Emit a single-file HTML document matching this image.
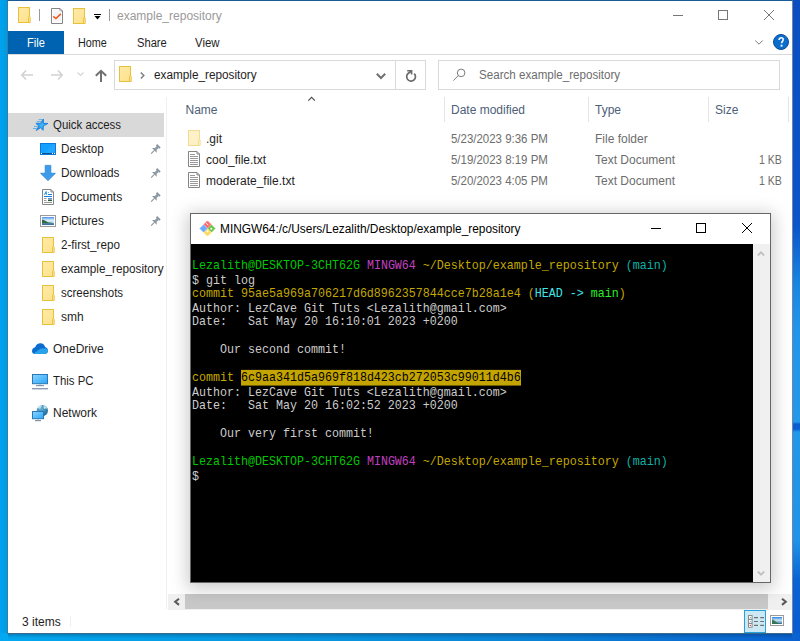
<!DOCTYPE html>
<html><head><meta charset="utf-8">
<style>
*{margin:0;padding:0;box-sizing:border-box}
html,body{width:800px;height:641px;overflow:hidden}
body{position:relative;font-family:"Liberation Sans",sans-serif;font-size:12px;color:#000;background:#0a5ad0}
.a{position:absolute}
.t{position:absolute;white-space:nowrap;line-height:12px;transform-origin:0 0}
svg{position:absolute;overflow:visible}
#deskL{left:0;top:0;width:8px;height:641px;background:linear-gradient(90deg,#00a4ee,#0299e2 85%,#2f7fa8)}
#deskR{left:792px;top:0;width:8px;height:641px;background:linear-gradient(180deg,#0b4ec0 0,#0b55c8 225px,#1a86e0 285px,#2196e8 330px,#2598e8 422px,#0a5ed0 424px,#0a5ed0 429px,#2298e8 432px,#2094e6 540px,#0a64d2 580px,#0a5ad0 641px)}
#deskB{left:0;top:633px;width:800px;height:8px;background:linear-gradient(90deg,#02a8f0 0%,#0898e0 35%,#0a84d6 65%,#0a62d0 100%)}
#deskS{left:8px;top:634px;width:784px;height:5px;background:linear-gradient(180deg,rgba(0,30,70,0.28),rgba(0,30,70,0.08) 60%,rgba(0,0,0,0))}
#win{left:7px;top:0;width:786px;height:634px;background:#fff;border:1px solid #2f80a8;border-top-color:#175a94;border-right-color:rgba(0,30,100,0.55);border-bottom-color:#3a6a8a}
.sep{position:absolute;background:#e5e5e5}
.hd{color:#4c607a}
.gr{color:#6d6d6d}
/* terminal */
#term{left:190px;top:213px;width:581px;height:370px;border:1px solid #666;background:#fff;
box-shadow:0 3px 16px 3px rgba(0,0,0,0.20)}
#tbody{position:absolute;left:0;top:30px;width:562px;height:338px;background:#000;overflow:hidden}
#tscroll{position:absolute;left:562px;top:30px;width:17px;height:338px;background:#f0f0f0}
pre{font-family:"Liberation Mono",monospace;font-size:11.67px;letter-spacing:0px;line-height:12.5px;transform:scaleY(1.12);transform-origin:0 0;color:#cccccc;position:absolute;left:1px;top:15px}
.g{color:#00c800}.m{color:#c040c0}.y{color:#c4a800}.c{color:#10b0a8}.o{color:#c4a800}.hc{color:#40e6e6}.hg{color:#28f028}
.hl{background:#c4a400;color:#000}
</style></head><body>
<svg width="0" height="0" style="position:absolute">
 <defs>
  <linearGradient id="fg" x1="0" y1="0" x2="1" y2="1"><stop offset="0" stop-color="#ffeaa8"/><stop offset="1" stop-color="#fde28a"/></linearGradient>
  <symbol id="folder" viewBox="0 0 13 16">
   <rect x="0.5" y="0.5" width="11" height="15" fill="url(#fg)" stroke="#e8c13c" stroke-width="1"/>
   <path d="M10.6 15.5V10.3A0.8 0.8 0 0 1 12.2 10.3V15.5Z" fill="#fff0b8" stroke="#e8c13c" stroke-width="1"/>
  </symbol>
  <symbol id="txt" viewBox="0 0 12 16">
   <path d="M0.5 0.5H9L11.5 3V15.5H0.5Z" fill="#fff" stroke="#858585"/>
   <path d="M9 0.5V3H11.5" fill="none" stroke="#858585"/>
   <path d="M2 3.5H7M2 5.5H10M2 7.5H10M2 9.5H10M2 11.5H10M2 13.5H10" stroke="#999" stroke-width="1"/>
  </symbol>
  <symbol id="pin" viewBox="0 0 20 18">
   <g transform="translate(13,5.7) rotate(45)" fill="#8a96a0">
    <rect x="-2.4" y="0" width="4.8" height="2"/>
    <rect x="-1.3" y="1.8" width="2.6" height="3"/>
    <path d="M-1.3 4.6H1.3L3.2 6.6H-3.2Z"/>
    <rect x="-0.55" y="6.5" width="1.1" height="4.6"/>
   </g>
  </symbol>
 </defs>
</svg>

<div id="deskL" class="a"></div>
<div id="deskR" class="a"></div>
<div id="deskB" class="a"></div>
<div id="deskS" class="a"></div>
<div id="win" class="a"></div>

<!-- ===== title bar ===== -->
<svg style="left:18px;top:7px" width="13" height="16"><use href="#folder"/></svg>
<div class="a" style="left:39px;top:9px;width:1px;height:12px;background:#999"></div>
<svg style="left:51px;top:8px" width="12" height="16" viewBox="0 0 12 16">
 <path d="M0.5 0.5H9L11.5 3V15.5H0.5Z" fill="#fff" stroke="#858585"/>
 <path d="M9 0.5V3H11.5" fill="none" stroke="#858585"/>
 <rect x="2" y="2.5" width="8" height="11" fill="#f3f4f6"/>
 <path d="M2.2 8.4L4.9 10.6L9.8 5.9" fill="none" stroke="#f0561c" stroke-width="1.5"/>
</svg>
<svg style="left:73px;top:8px" width="13" height="16"><use href="#folder"/></svg>
<div class="a" style="left:94px;top:14px;width:7px;height:1px;background:#000"></div>
<svg style="left:94px;top:16px" width="7" height="4" viewBox="0 0 7 4"><path d="M0.5 0H6.5L3.5 3.5Z" fill="#000"/></svg>
<div class="a" style="left:109px;top:9px;width:1px;height:12px;background:#999"></div>
<div class="t" style="left:117px;top:10px;color:#9a9a9a">example_repository</div>
<!-- window controls -->
<div class="a" style="left:673px;top:15px;width:10px;height:1px;background:#777"></div>
<div class="a" style="left:718px;top:10px;width:10px;height:10px;border:1px solid #777"></div>
<svg style="left:764px;top:10px" width="10" height="10" viewBox="0 0 10 10"><path d="M0 0L10 10M10 0L0 10" stroke="#777" stroke-width="1"/></svg>

<!-- ===== ribbon tabs ===== -->
<div class="a" style="left:8px;top:31px;width:56px;height:23px;background:#0063b1"></div>
<div class="t" style="left:27px;top:37px;color:#fff;transform:scaleX(0.92)">File</div>
<div class="t" style="left:78px;top:37px;color:#1e1e1e;transform:scaleX(0.9)">Home</div>
<div class="t" style="left:137px;top:37px;color:#1e1e1e;transform:scaleX(0.93)">Share</div>
<div class="t" style="left:195px;top:37px;color:#1e1e1e;transform:scaleX(0.95)">View</div>
<svg style="left:755px;top:40px" width="8" height="5" viewBox="0 0 8 5"><path d="M0.3 0.5L4 4.2L7.7 0.5" fill="none" stroke="#7a7a7a" stroke-width="1"/></svg>
<svg style="left:773px;top:34px" width="16" height="16" viewBox="0 0 16 16">
 <circle cx="8" cy="8" r="7.5" fill="#0a6ccb" stroke="#0b4c9a" stroke-width="1"/>
 <path d="M6.1 6.1C6.1 4.6 7 3.8 8.2 3.8C9.4 3.8 10.2 4.6 10.2 5.7C10.2 7.3 8.6 7.5 8.6 9.3" fill="none" stroke="#f4f8ff" stroke-width="1.6"/>
 <rect x="7.6" y="10.7" width="1.9" height="1.9" fill="#f4f8ff"/>
</svg>
<div class="sep" style="left:8px;top:54px;width:784px;height:1px;background:#dadada"></div>

<!-- ===== address row ===== -->
<svg style="left:21px;top:70px" width="12" height="10" viewBox="0 0 12 10"><path d="M5 0.5L0.8 5L5 9.5M0.8 5H12" fill="none" stroke="#d2d2d2" stroke-width="1.6"/></svg>
<svg style="left:51px;top:70px" width="12" height="10" viewBox="0 0 12 10"><path d="M7 0.5L11.2 5L7 9.5M11.2 5H0" fill="none" stroke="#d2d2d2" stroke-width="1.6"/></svg>
<svg style="left:77px;top:72px" width="7" height="4" viewBox="0 0 7 4"><path d="M0.5 0.5L3.5 3.5L6.5 0.5" fill="none" stroke="#d6d6d6" stroke-width="1.2"/></svg>
<svg style="left:95px;top:70px" width="12" height="12" viewBox="0 0 12 12"><path d="M0.8 5.8L6 0.8L11.2 5.8M6 1V12" fill="none" stroke="#707070" stroke-width="2"/></svg>

<div class="a" style="left:114px;top:60px;width:312px;height:30px;border:1px solid #d9d9d9"></div>
<svg style="left:119px;top:66px" width="13" height="16"><use href="#folder"/></svg>
<svg style="left:140px;top:72px" width="5" height="7" viewBox="0 0 5 7"><path d="M0.8 0.5L3.8 3.5L0.8 6.5" fill="none" stroke="#808080" stroke-width="1.5"/></svg>
<div class="t" style="left:154px;top:69px;color:#1e1e1e;transform:scaleX(0.98)">example_repository</div>
<svg style="left:376px;top:73px" width="10" height="6" viewBox="0 0 10 6"><path d="M0.8 0.8L5 5L9.2 0.8" fill="none" stroke="#707070" stroke-width="2"/></svg>
<div class="a" style="left:395px;top:61px;width:1px;height:28px;background:#d9d9d9"></div>
<svg style="left:405px;top:70px" width="12" height="11" viewBox="0 0 12 11">
 <path d="M9.2 3.6A4.4 4.4 0 1 1 3.4 3.2L6.4 1" fill="none" stroke="#6a6a6a" stroke-width="1.7"/>
 <path d="M2.2 0.8H6.6V4.6" fill="none" stroke="#6a6a6a" stroke-width="1.6"/>
</svg>
<div class="a" style="left:438px;top:60px;width:342px;height:30px;border:1px solid #d9d9d9"></div>
<svg style="left:452px;top:68px" width="13" height="13" viewBox="0 0 13 13">
 <circle cx="9.1" cy="4.9" r="3.8" fill="none" stroke="#7a7a7a" stroke-width="1"/>
 <path d="M6.2 7.7L1.3 12.6" stroke="#7a7a7a" stroke-width="1"/>
</svg>
<div class="t" style="left:479px;top:69px;color:#6d6d6d;transform:scaleX(0.966)">Search example_repository</div>

<!-- ===== nav pane ===== -->
<div class="a" style="left:8px;top:113px;width:156px;height:24px;background:#d9d9d9"></div>
<svg style="left:30px;top:115px" width="22" height="20" viewBox="0 0 22 20">
 <defs><radialGradient id="stg" cx="0.5" cy="0.55" r="0.5"><stop offset="0" stop-color="#48baff"/><stop offset="1" stop-color="#1a8ae0"/></radialGradient></defs>
 <path d="M13.4 4L13.37 8.37L18 8.4L13.3 11.03L13.1 15.3L10.55 12.7L6.3 15.5L8.86 11.05L5.9 8.3L10.52 8.35Z" fill="url(#stg)" stroke="#1880d8" stroke-width="0.9" stroke-linejoin="round"/>
 <path d="M9 4.6H12.3M7.2 6.6H10.8M4.4 11.4H7.4M3.4 13.5H6.4" stroke="#3aa6f0" stroke-width="0.9" stroke-linecap="round" opacity="0.85"/>
</svg>
<div class="t" style="left:53px;top:119px;color:#1e1e1e;transform:scaleX(0.952)">Quick access</div>

<svg style="left:40px;top:143px" width="16" height="12" viewBox="0 0 16 12">
 <rect x="0" y="0" width="16" height="12" fill="#0a7ad6"/>
 <rect x="1" y="1" width="14" height="9" fill="#14a0ff"/>
 <path d="M5 10L13 1H15V10Z" fill="#2aabff" opacity="0.6"/>
 <rect x="2" y="10" width="12" height="1" fill="#0a5090"/>
 <rect x="1" y="10" width="1" height="1" fill="#fff"/><rect x="12" y="10" width="1" height="1" fill="#fff"/><rect x="14" y="10" width="1" height="1" fill="#fff"/>
</svg>
<div class="t" style="left:61px;top:143px;color:#1e1e1e;transform:scaleX(0.97)">Desktop</div>
<svg style="left:146px;top:140px" width="20" height="18"><use href="#pin" width="20" height="18"/></svg>

<svg style="left:40px;top:165px" width="16" height="16" viewBox="0 0 16 16"><path d="M5.2 0.4H10.8V8.3H15.4L8 15.6L0.6 8.3H5.2Z" fill="#3d9bea" stroke="#2484da" stroke-width="0.8" stroke-linejoin="miter"/></svg>
<div class="t" style="left:61px;top:167px;color:#1e1e1e;transform:scaleX(0.985)">Downloads</div>
<svg style="left:146px;top:164px" width="20" height="18"><use href="#pin" width="20" height="18"/></svg>

<svg style="left:42px;top:189px" width="12" height="16" viewBox="0 0 12 16">
 <path d="M0.5 0.5H9L11.5 3V15.5H0.5Z" fill="#fff" stroke="#858585"/>
 <path d="M9 0.5V3H11.5" fill="none" stroke="#858585"/>
 <path d="M2.2 5.8L4.2 2.4L4.6 5.8M3 4.6H4.6" fill="none" stroke="#1e8ee8" stroke-width="0.9"/>
 <circle cx="6.3" cy="3.4" r="0.5" fill="#1e8ee8"/>
 <path d="M6 5.5H10M2 7.5H10" stroke="#1a7fd8" stroke-width="1"/>
 <path d="M2 9.5H4.5M2 11.5H4.5M2 13.5H10" stroke="#999" stroke-width="1"/>
 <rect x="6" y="9" width="4" height="1" fill="#5a8ae8"/>
 <rect x="6" y="10.5" width="4" height="1.6" fill="#2a5a3a"/>
</svg>
<div class="t" style="left:61px;top:191px;color:#1e1e1e;transform:scaleX(1.01)">Documents</div>
<svg style="left:146px;top:188px" width="20" height="18"><use href="#pin" width="20" height="18"/></svg>

<svg style="left:40px;top:215px" width="16" height="12" viewBox="0 0 16 12">
 <rect x="0.5" y="0.5" width="15" height="11" fill="#fff" stroke="#9a9a9a"/>
 <defs><linearGradient id="sky" x1="0" y1="0" x2="0" y2="1"><stop offset="0" stop-color="#4a8ef0"/><stop offset="0.4" stop-color="#d8f0f8"/><stop offset="0.75" stop-color="#b8d8e8"/><stop offset="1" stop-color="#3a6ab0"/></linearGradient></defs>
 <rect x="2" y="2" width="12" height="8" fill="url(#sky)"/>
 <path d="M2 4.8C4 4.6 5.5 6 7.5 7C9 7.7 11 7.6 13 8V8.4H2Z" fill="#2f6a45"/>
 <path d="M2 8.4H14V10H2Z" fill="#3a6aa8" opacity="0.8"/>
</svg>
<div class="t" style="left:61px;top:215px;color:#1e1e1e;transform:scaleX(0.99)">Pictures</div>
<svg style="left:146px;top:212px" width="20" height="18"><use href="#pin" width="20" height="18"/></svg>

<svg style="left:42px;top:237px" width="13" height="16"><use href="#folder"/></svg>
<div class="t" style="left:61px;top:239px;color:#1e1e1e;transform:scaleX(0.97)">2-first_repo</div>
<svg style="left:42px;top:261px" width="13" height="16"><use href="#folder"/></svg>
<div class="t" style="left:61px;top:263px;color:#1e1e1e;transform:scaleX(0.98)">example_repository</div>
<svg style="left:42px;top:285px" width="13" height="16"><use href="#folder"/></svg>
<div class="t" style="left:61px;top:287px;color:#1e1e1e;transform:scaleX(0.96)">screenshots</div>
<svg style="left:42px;top:309px" width="13" height="16"><use href="#folder"/></svg>
<div class="t" style="left:61px;top:311px;color:#1e1e1e">smh</div>

<svg style="left:32px;top:343px" width="16" height="11" viewBox="0 0 16 11">
 <path d="M3 11C1.2 11 0 9.8 0 8C0 6.2 1.3 4.5 3.2 4.3C4 1.8 6 0.3 8.5 0.3C10.8 0.3 12.6 1.8 13.1 4C14.8 4.4 16 5.8 16 7.6C16 9.6 14.6 11 12.6 11Z" fill="#0c6cd0"/>
 <path d="M1.6 10.6L8.8 5.6L14 5.2C15.2 5.8 16 6.6 16 7.6C16 9.6 14.6 11 12.6 11H3C2.5 11 2 10.9 1.6 10.6Z" fill="#28a2ea"/>
</svg>
<div class="t" style="left:53px;top:343px;color:#1e1e1e">OneDrive</div>

<svg style="left:32px;top:374px" width="16" height="16" viewBox="0 0 16 16">
 <defs><linearGradient id="scr" x1="0" y1="0" x2="1" y2="1"><stop offset="0" stop-color="#8ad4ff"/><stop offset="1" stop-color="#2aa6f8"/></linearGradient></defs>
 <rect x="0.5" y="0.5" width="15" height="9.2" fill="url(#scr)" stroke="#2a78b8" stroke-width="1"/>
 <rect x="7" y="10" width="2" height="1" fill="#b8c8d4"/>
 <rect x="4" y="11" width="8" height="1.2" fill="#8494a8"/>
 <rect x="0" y="14" width="16" height="1.4" fill="#8a9cb0"/>
</svg>
<div class="t" style="left:53px;top:375px;color:#1e1e1e;transform:scaleX(0.95)">This PC</div>

<svg style="left:28px;top:402px" width="24" height="22" viewBox="0 0 24 22">
 <defs><radialGradient id="glb" cx="0.35" cy="0.3" r="0.75"><stop offset="0" stop-color="#6ab4d8"/><stop offset="1" stop-color="#1e6a98"/></radialGradient></defs>
 <circle cx="14.4" cy="8.6" r="5.6" fill="url(#glb)"/>
 <path d="M10 5.5C11 4 12.5 3.2 14 3.4C13.6 4.6 12.4 5 12.6 6.3C11.8 7 10.6 6.8 10 5.5ZM15.5 3.6C17 3.8 18.5 5 19.2 6.5C18.2 6.8 17.2 6.2 16.8 7.4C16 6.6 15.2 5.2 15.5 3.6Z" fill="#d0ecf4" opacity="0.9"/>
 <rect x="4.5" y="9.5" width="11" height="7.2" fill="url(#scr)" stroke="#2a78b8" stroke-width="1"/>
 <rect x="9" y="17" width="2" height="1" fill="#b8c8d4"/>
 <rect x="7" y="18" width="6" height="1.2" fill="#8494a8"/>
</svg>
<div class="t" style="left:53px;top:407px;color:#1e1e1e">Network</div>

<div class="sep" style="left:166px;top:97px;width:1px;height:512px;background:#f0f0f0"></div>

<!-- ===== file list ===== -->
<svg style="left:308px;top:96px" width="8" height="5" viewBox="0 0 8 5"><path d="M0.3 4.6L3.6 1.3L6.9 4.6" fill="none" stroke="#4a4a4a" stroke-width="1.1"/></svg>
<div class="t hd" style="left:185.5px;top:104px">Name</div>
<div class="t hd" style="left:451px;top:104px">Date modified</div>
<div class="t hd" style="left:595px;top:104px">Type</div>
<div class="t hd" style="left:715px;top:104px">Size</div>
<div class="sep" style="left:444px;top:97px;width:1px;height:25px"></div>
<div class="sep" style="left:588px;top:97px;width:1px;height:25px"></div>
<div class="sep" style="left:708px;top:97px;width:1px;height:25px"></div>
<div class="sep" style="left:788px;top:97px;width:1px;height:25px"></div>

<svg style="left:188px;top:130px;opacity:0.55" width="13" height="16"><use href="#folder"/></svg>
<svg style="left:188px;top:151px" width="12" height="16"><use href="#txt"/></svg>
<svg style="left:188px;top:172px" width="12" height="16"><use href="#txt"/></svg>
<div class="t" style="left:206px;top:133px;color:#1e1e1e">.git</div>
<div class="t" style="left:206px;top:154px;color:#1e1e1e">cool_file.txt</div>
<div class="t" style="left:206px;top:175px;color:#1e1e1e">moderate_file.txt</div>
<div class="t gr" style="left:451px;top:133px;transform:scaleX(0.955)">5/23/2023 9:36 PM</div>
<div class="t gr" style="left:451px;top:154px;transform:scaleX(0.955)">5/19/2023 8:19 PM</div>
<div class="t gr" style="left:451px;top:175px;transform:scaleX(0.955)">5/20/2023 4:05 PM</div>
<div class="t gr" style="left:595px;top:133px">File folder</div>
<div class="t gr" style="left:595px;top:154px">Text Document</div>
<div class="t gr" style="left:595px;top:175px">Text Document</div>
<div class="t gr" style="left:759px;top:154px;transform:scaleX(0.88)">1 KB</div>
<div class="t gr" style="left:759px;top:175px;transform:scaleX(0.88)">1 KB</div>

<!-- ===== h scrollbar ===== -->
<div class="a" style="left:168px;top:594px;width:624px;height:16px;background:#f0f0f0"></div>
<div class="a" style="left:185px;top:594px;width:583px;height:15px;background:#c8c8c8"></div>
<svg style="left:173px;top:598px" width="7" height="8" viewBox="0 0 7 8"><path d="M6 0.7L2.2 3.8L6 6.9" fill="none" stroke="#5a5a5a" stroke-width="2.1"/></svg>
<svg style="left:781px;top:598px" width="7" height="8" viewBox="0 0 7 8"><path d="M1 0.7L4.8 3.8L1 6.9" fill="none" stroke="#5a5a5a" stroke-width="2.1"/></svg>

<!-- ===== status ===== -->
<div class="t" style="left:22px;top:616px;color:#1e1e1e">3 items</div>
<div class="a" style="left:70px;top:616px;width:1px;height:11px;background:#f0f0f0"></div>
<div class="a" style="left:744px;top:610px;width:22px;height:23px;background:#cce8f4;border:1px solid #26a0da"></div>
<svg style="left:748px;top:615px" width="17" height="13" viewBox="0 0 17 13">
 <rect x="0" y="0" width="4.6" height="12.7" fill="#8a8a8a"/>
 <rect x="1" y="1" width="2.6" height="2.8" fill="#fff"/>
 <rect x="1" y="5" width="2.6" height="2.8" fill="#fff"/>
 <rect x="1" y="9" width="2.6" height="2.8" fill="#fff"/>
 <circle cx="2.3" cy="2.4" r="0.5" fill="#3a8a5a"/>
 <circle cx="2.3" cy="6.4" r="0.5" fill="#4a8ae0"/>
 <circle cx="2.3" cy="10.4" r="0.6" fill="#e02020"/>
 <path d="M6 2.6H10M12.2 2.6H16M6 6.5H10M12.2 6.5H16M6 10.4H10M12.2 10.4H16" stroke="#707070" stroke-width="1.1"/>
</svg>
<svg style="left:770px;top:615px" width="14" height="11" viewBox="0 0 14 11">
 <rect x="0.5" y="0.5" width="13" height="10" fill="#fff" stroke="#9a9a9a"/>
 <defs><linearGradient id="sky2" x1="0" y1="0" x2="0" y2="1"><stop offset="0" stop-color="#2a80e0"/><stop offset="0.45" stop-color="#c8e8f8"/><stop offset="1" stop-color="#3a70a0"/></linearGradient></defs>
 <rect x="2" y="2" width="10" height="7" fill="url(#sky2)"/>
 <path d="M2 4.5C4 4.5 5 6 7 7.5C8 8.5 10 8.5 12 9H2Z" fill="#2f6e45" opacity="0.85"/>
</svg>

<!-- ===== terminal ===== -->
<div id="term" class="a">
  <svg style="left:8px;top:6px" width="17" height="17" viewBox="0 0 17 17">
   <path d="M8.5 1L12 4.5L8.5 8L5 4.5Z" fill="#ff6a6a" stroke="#ff6a6a" stroke-width="0.8" stroke-linejoin="round"/>
   <path d="M12.5 5L16 8.5L12.5 12L9 8.5Z" fill="#6cc24a" stroke="#6cc24a" stroke-width="0.8" stroke-linejoin="round"/>
   <path d="M8.5 9L12 12.5L8.5 16L5 12.5Z" fill="#ffd95a" stroke="#ffd95a" stroke-width="0.8" stroke-linejoin="round"/>
   <path d="M4.5 5L8 8.5L4.5 12L1 8.5Z" fill="#6ea8ff" stroke="#6ea8ff" stroke-width="0.8" stroke-linejoin="round"/>
   <path d="M7.3 3.2L9.3 5.2" stroke="#fff" stroke-width="1"/>
   <circle cx="12.3" cy="8.7" r="1" fill="#fff"/><circle cx="8.5" cy="11.6" r="1" fill="#fff"/>
  </svg>
  <div class="t" style="left:29px;top:9px;color:#000;transform:scaleX(0.99)">MINGW64:/c/Users/Lezalith/Desktop/example_repository</div>
  <div class="a" style="left:460px;top:14px;width:10px;height:1px;background:#000"></div>
  <div class="a" style="left:505px;top:9px;width:10px;height:10px;border:1px solid #000"></div>
  <svg style="left:551px;top:9px" width="10" height="10" viewBox="0 0 10 10"><path d="M0 0L10 10M10 0L0 10" stroke="#000" stroke-width="1"/></svg>
  <div id="tbody">
<pre><span class="g">Lezalith@DESKTOP-3CHT62G</span> <span class="m">MINGW64</span> <span class="y">~/Desktop/example_repository</span> <span class="c">(main)</span>
$ git log
<span class="o">commit 95ae5a969a706217d6d8962357844cce7b28a1e4 (</span><span class="hc">HEAD -&gt; </span><span class="hg">main</span><span class="o">)</span>
Author: LezCave Git Tuts &lt;Lezalith@gmail.com&gt;
Date:   Sat May 20 16:10:01 2023 +0200

    Our second commit!

<span class="o">commit </span><span class="hl">6c9aa341d5a969f818d423cb272053c99011d4b6</span>
Author: LezCave Git Tuts &lt;Lezalith@gmail.com&gt;
Date:   Sat May 20 16:02:52 2023 +0200

    Our very first commit!

<span class="g">Lezalith@DESKTOP-3CHT62G</span> <span class="m">MINGW64</span> <span class="y">~/Desktop/example_repository</span> <span class="c">(main)</span>
$</pre>
  </div>
  <div id="tscroll">
   <svg style="left:4px;top:7px" width="8" height="5" viewBox="0 0 8 5"><path d="M0.8 4.5L4 1.3L7.2 4.5" fill="none" stroke="#c0c0c0" stroke-width="1.8"/></svg>
   <svg style="left:4px;top:327px" width="8" height="5" viewBox="0 0 8 5"><path d="M0.8 0.5L4 3.7L7.2 0.5" fill="none" stroke="#c0c0c0" stroke-width="1.8"/></svg>
  </div>
</div>
</body></html>
